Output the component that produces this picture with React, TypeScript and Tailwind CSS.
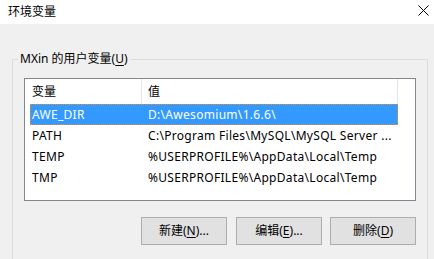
const font = "font-['Noto_Sans','Noto_Sans_CJK_SC',sans-serif]";

const rows = [
  { name: 'AWE_DIR', value: 'D:\\Awesomium\\1.6.6\\' },
  { name: 'PATH', value: 'C:\\Program Files\\MySQL\\MySQL Server ...' },
  { name: 'TEMP', value: '%USERPROFILE%\\AppData\\Local\\Temp' },
  { name: 'TMP', value: '%USERPROFILE%\\AppData\\Local\\Temp' },
];

function Btn({ label, hotkey, tail }: { label: string; hotkey: string; tail: string }) {
  return (
    <button
      type="button"
      className="flex h-[28px] w-[86px] items-center justify-center border border-[#adadad] bg-[#e1e1e1] text-[12px] leading-[16px] text-black"
    >
      {label}(<span className="underline underline-offset-2">{hotkey}</span>){tail}
    </button>
  );
}

export default function App() {
  return (
    <div className={`h-[259px] w-[434px] overflow-hidden bg-[#f0f0f0] text-[12px] text-black ${font}`}>
      {/* Title bar */}
      <div className="flex h-[24px] items-center justify-between bg-white pl-[8px] pr-[5px]">
        <span className="leading-[16px]">环境变量</span>
        <svg width="11" height="11" viewBox="0 0 11 11" className="mb-[3px]">
          <path d="M0.5 0.5L10.5 10.5M10.5 0.5L0.5 10.5" stroke="#000" strokeWidth="1" />
        </svg>
      </div>

      {/* Group box */}
      <div className="pl-[12px] pr-[6px] pt-[35px]">
        <div className="relative h-[230px] border border-[#dcdcdc] px-[11px] pt-[18px]">
          <span className="absolute left-[5px] top-[-9px] bg-[#f0f0f0] px-[2px] leading-[16px]">
            MXin 的用户变量(<span className="underline underline-offset-2">U</span>)
          </span>

          {/* List view */}
          <div className="h-[123px] border border-[#828790] bg-white">
            <div className="flex h-[25px] pl-[5px]">
              <div className="flex w-[112px] items-center border-r border-[#e5e5e5] pl-[2px]">变量</div>
              <div className="flex w-[256px] items-center border-r border-[#e5e5e5] pl-[6px]">值</div>
            </div>
            {rows.map((r, i) => (
              <div
                key={r.name}
                className={
                  i === 0
                    ? 'ml-[5px] flex h-[21px] w-[368px] items-center border border-dotted border-[#f08a24] bg-[#3399ff] tracking-[0.3px] text-white'
                    : 'ml-[5px] flex h-[21px] w-[368px] items-center border border-transparent tracking-[0.3px]'
                }
              >
                <div className="w-[117px] pl-[1px] leading-[17px]">{r.name}</div>
                <div className="min-w-0 flex-1 whitespace-nowrap leading-[17px]">{r.value}</div>
              </div>
            ))}
          </div>

          {/* Buttons */}
          <div className="mt-[16px] flex justify-end gap-[8px]">
            <div className="mr-px">
              <Btn label="新建" hotkey="N" tail="..." />
            </div>
            <Btn label="编辑" hotkey="E" tail="..." />
            <Btn label="删除" hotkey="D" tail="" />
          </div>
        </div>
      </div>
    </div>
  );
}
